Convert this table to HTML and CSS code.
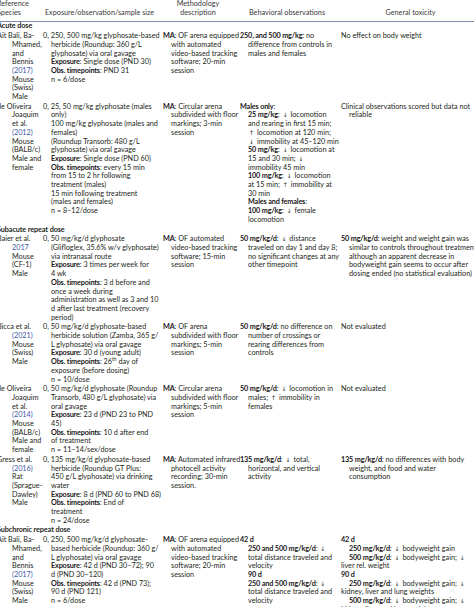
FILE: index.html
```html
<!DOCTYPE html>
<html lang="en">
<head>
<meta charset="utf-8">
<title>Glyphosate behavioral studies</title>
<link rel="stylesheet" href="styles.css">
</head>
<body>
<div class="tbl">
  <div class="row head">
    <div class="h h1">Reference<br>Species</div>
    <div class="h">Exposure/observation/sample size</div>
    <div class="h">Methodology<br>description</div>
    <div class="h">Behavioral observations</div>
    <div class="h">General toxicity</div>
  </div>

  <div class="sec">Acute dose</div>

  <div class="row">
    <div class="c ref">Aït Bali, Ba-<br>Mhamed,<br>and<br>Bennis<br><a>(2017)</a><br>Mouse<br>(Swiss)<br>Male</div>
    <div class="c">0, 250, 500 mg/kg glyphosate-based<br>herbicide (Roundup: 360 g/L<br>glyphosate) via oral gavage<br><b>Exposure</b>: Single dose (PND 30)<br><b>Obs. timepoints</b>: PND 31<br>n = 6/dose</div>
    <div class="c"><b>MA</b>: OF arena equipped<br>with automated<br>video-based tracking<br>software; 20-min<br>session</div>
    <div class="c"><b>250, and 500 mg/kg</b>: no<br>difference from controls in<br>males and females</div>
    <div class="c">No effect on body weight</div>
  </div>

  <div class="row">
    <div class="c ref">de Oliveira<br>Joaquim<br>et al.<br><a>(2012)</a><br>Mouse<br>(BALB/c)<br>Male and<br>female</div>
    <div class="c">0, 25, 50 mg/kg glyphosate (males<br>only)<br>100 mg/kg glyphosate (males and<br>females)<br>(Roundup Transorb: 480 g/L<br>glyphosate) via oral gavage<br><b>Exposure</b>: Single dose (PND 60)<br><b>Obs. timepoints</b>: every 15 min<br>from 15 to 2 hr following<br>treatment (males)<br>15 min following treatment<br>(males and females)<br>n = 8–12/dose</div>
    <div class="c"><b>MA</b>: Circular arena<br>subdivided with floor<br>markings; 3-min<br>session</div>
    <div class="c"><b>Males only</b>:<br><b>25 mg/kg</b>: <span class="ar">↓</span> locomotion<br>and rearing in first 15 min;<br><span class="ar">↑</span> locomotion at 120 min;<br><span class="ar">↓</span> immobility at 45–120 min<br><b>50 mg/kg</b>: <span class="ar">↓</span> locomotion at<br>15 and 30 min; <span class="ar">↓</span><br>immobility 45 min<br><b>100 mg/kg</b>: <span class="ar">↓</span> locomotion<br>at 15 min; <span class="ar">↑</span> immobility at<br>30 min<br><b>Males and females</b>:<br><b>100 mg/kg</b>: <span class="ar">↓</span> female<br>locomotion</div>
    <div class="c">Clinical observations scored but data not<br>reliable</div>
  </div>

  <div class="sec">Subacute repeat dose</div>

  <div class="row">
    <div class="c ref">Baier et al.<br><a>2017</a><br>Mouse<br>(CF-1)<br>Male</div>
    <div class="c">0, 50 mg/kg/d glyphosate<br>(Glifloglex, 35.6% w/v glyphosate)<br>via intranasal route<br><b>Exposure</b>: 3 times per week for<br>4 wk<br><b>Obs. timepoints</b>: 3 d before and<br>once a week during<br>administration as well as 3 and 10<br>d after last treatment (recovery<br>period)</div>
    <div class="c"><b>MA</b>: OF automated<br>video-based tracking<br>software; 15-min<br>session</div>
    <div class="c"><b>50 mg/kg/d</b>: <span class="ar">↓</span> distance<br>traveled on day 1 and day 8;<br>no significant changes at any<br>other timepoint</div>
    <div class="c"><b>50 mg/kg/d</b>: weight and weight gain was<br>similar to controls throughout treatment<br>although an apparent decrease in<br>bodyweight gain seems to occur after<br>dosing ended (no statistical evaluation)</div>
  </div>

  <div class="row">
    <div class="c ref">Bicca et al.<br><a>(2021)</a><br>Mouse<br>(Swiss)<br>Male</div>
    <div class="c">0, 50 mg/kg/d glyphosate-based<br>herbicide solution (Zamba, 365 g/<br>L glyphosate) via oral gavage<br><b>Exposure</b>: 30 d (young adult)<br><b>Obs. timepoints</b>: 26<sup>th</sup> day of<br>exposure (before dosing)<br>n = 10/dose</div>
    <div class="c"><b>MA</b>: OF arena<br>subdivided with floor<br>markings; 5-min<br>session</div>
    <div class="c"><b>50 mg/kg/d</b>: no difference on<br>number of crossings or<br>rearing differences from<br>controls</div>
    <div class="c">Not evaluated</div>
  </div>

  <div class="row">
    <div class="c ref">de Oliveira<br>Joaquim<br>et al.<br><a>(2014)</a><br>Mouse<br>(BALB/c)<br>Male and<br>female</div>
    <div class="c">0, 50 mg/kg/d glyphosate (Roundup<br>Transorb, 480 g/L glyphosate) via<br>oral gavage<br><b>Exposure</b>: 23 d (PND 23 to PND<br>45)<br><b>Obs. timepoints</b>: 10 d after end<br>of treatment<br>n = 11–14/sex/dose</div>
    <div class="c"><b>MA</b>: Circular arena<br>subdivided with floor<br>markings; 5-min<br>session</div>
    <div class="c"><b>50 mg/kg/d</b>: <span class="ar">↓</span> locomotion in<br>males; <span class="ar">↑</span> immobility in<br>females</div>
    <div class="c">Not evaluated</div>
  </div>

  <div class="row">
    <div class="c ref">Gress et al.<br><a>(2016)</a><br>Rat<br>(Sprague-<br>Dawley)<br>Male</div>
    <div class="c">0, 135 mg/kg/d glyphosate-based<br>herbicide (Roundup GT Plus:<br>450 g/L glyphosate) via drinking<br>water<br><b>Exposure</b>: 8 d (PND 60 to PND 68)<br><b>Obs. timepoints</b>: End of<br>treatment<br>n = 24/dose</div>
    <div class="c"><b>MA</b>: Automated infrared<br>photocell activity<br>recording; 30-min<br>session.</div>
    <div class="c"><b>135 mg/kg/d</b>: <span class="ar">↓</span> total,<br>horizontal, and vertical<br>activity</div>
    <div class="c"><b>135 mg/kg/d</b>: no differences with body<br>weight, and food and water<br>consumption</div>
  </div>

  <div class="sec">Subchronic repeat dose</div>

  <div class="row">
    <div class="c ref">Aït Bali, Ba-<br>Mhamed,<br>and<br>Bennis<br><a>(2017)</a><br>Mouse<br>(Swiss)<br>Male</div>
    <div class="c">0, 250, 500 mg/kg/d glyphosate-<br>based herbicide (Roundup: 360 g/<br>L glyphosate) via oral gavage<br><b>Exposure</b>: 42 d (PND 30–72); 90<br>d (PND 30–120)<br><b>Obs. timepoints</b>: 42 d (PND 73);<br>90 d (PND 121)<br>n = 6/dose</div>
    <div class="c"><b>MA</b>: OF arena equipped<br>with automated<br>video-based tracking<br>software; 20-min<br>session</div>
    <div class="c"><b>42 d</b><br><b>250 and 500 mg/kg/d</b>: <span class="ar">↓</span><br>total distance traveled and<br>velocity<br><b>90 d</b><br><b>250 and 500 mg/kg/d</b>: <span class="ar">↓</span><br>total distance traveled and<br>velocity</div>
    <div class="c tox">
      <p class="t0"><b>42 d</b></p>
      <p><b>250 mg/kg/d</b>: <span class="ar">↓</span> bodyweight gain</p>
      <p><b>500 mg/kg/d</b>: <span class="ar">↓</span> bodyweight gain; <span class="ar">↓</span><br>liver rel. weight</p>
      <p class="t0"><b>90 d</b></p>
      <p><b>250 mg/kg/d</b>: <span class="ar">↓</span> bodyweight gain; <span class="ar">↓</span><br>kidney, liver and lung weights</p>
      <p><b>500 mg/kg/d</b>: <span class="ar">↓</span> bodyweight gain; <span class="ar">↓</span><br>kidney, liver and lung weights</p>
    </div>
  </div>
</div>
</body>
</html>
```

FILE: styles.css
```css
html, body {
  margin: 0;
  padding: 0;
  background: #ffffff;
}

body {
  font-family: Lato, "Liberation Sans", sans-serif;
  font-size: 7.25px;
  line-height: 8.7px;
  color: #231f20;
  overflow: hidden;
}

.tbl {
  margin-left: -3px;
  margin-top: 0;
  width: 490px;
}

.row {
  display: grid;
  grid-template-columns: 46px 120px 77px 101px 146px;
  padding-bottom: 1px;
}

.head {
  align-items: end;
  border-bottom: 1px solid #7d8ba6;
  padding-bottom: 4px;
}

.h {
  text-align: center;
  color: #3a3a3a;
  padding-right: 7px;
  white-space: nowrap;
}

.h1 {
  text-align: left;
}

.sec {
  font-weight: bold;
  padding-bottom: 1px;
  letter-spacing: -0.1px;
}

.c {
  padding-left: 8px;
  text-indent: -8px;
  white-space: nowrap;
}

.c.ref {
  padding-left: 15px;
  text-indent: -15px;
}

.c b {
  font-weight: bold;
  color: #1a1718;
  letter-spacing: -0.15px;
}

.c a {
  color: #3e5aa8;
}

.c sup {
  font-size: 5px;
  line-height: 0;
  vertical-align: 3px;
}

.ar {
  font-family: "DejaVu Sans", sans-serif;
  font-size: 6px;
  margin: 0 1px;
}

.tox {
  padding-left: 0;
  text-indent: 0;
}

.tox p {
  margin: 0;
  text-indent: 8px;
}

.tox p.t0 {
  text-indent: 0;
}
```
